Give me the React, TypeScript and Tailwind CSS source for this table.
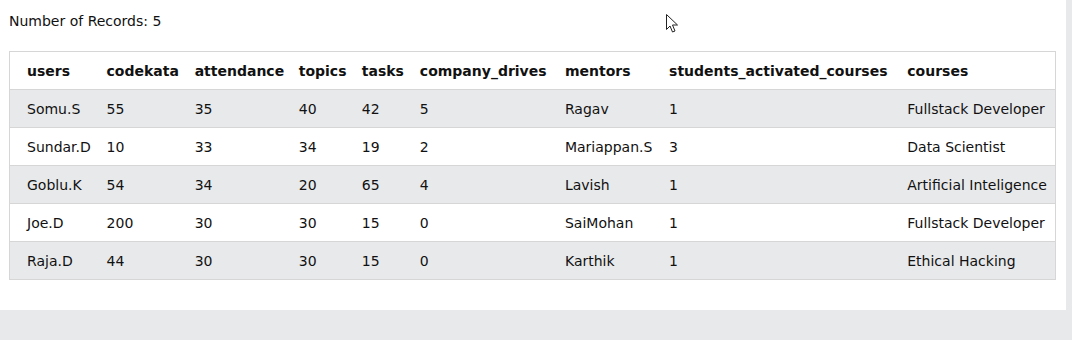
import React from "react";

const rows = [
  ["Somu.S", "55", "35", "40", "42", "5", "Ragav", "1", "Fullstack Developer"],
  ["Sundar.D", "10", "33", "34", "19", "2", "Mariappan.S", "3", "Data Scientist"],
  ["Goblu.K", "54", "34", "20", "65", "4", "Lavish", "1", "Artificial Inteligence"],
  ["Joe.D", "200", "30", "30", "15", "0", "SaiMohan", "1", "Fullstack Developer"],
  ["Raja.D", "44", "30", "30", "15", "0", "Karthik", "1", "Ethical Hacking"],
];
const headers = [
  "users",
  "codekata",
  "attendance",
  "topics",
  "tasks",
  "company_drives",
  "mentors",
  "students_activated_courses",
  "courses",
];
const widths = [
  "w-[80px]",
  "w-[88px]",
  "w-[104px]",
  "w-[63px]",
  "w-[58px]",
  "w-[145px]",
  "w-[104px]",
  "w-[238px]",
  "w-[165px]",
];

export default function App() {
  return (
    <div
      className="w-[1072px] h-[340px] bg-[#e8e9eb] text-[#111] text-[14px] relative overflow-hidden"
      style={{ fontFamily: "Verdana, 'DejaVu Sans', sans-serif" }}
    >
      <div className="w-[1066px] h-[310px] bg-white pt-[12px] pl-[9px]">
        <div className="leading-[18px]">Number of Records: 5</div>
        <table className="mt-[21px] border-collapse border border-[#d6d6d6] table-fixed w-[1047px]">
          <thead>
            <tr className="h-[38px]">
              {headers.map((h, i) => (
                <th
                  key={h}
                  className={`${widths[i]} text-left font-bold pl-[17px] pr-0 pt-[1px] whitespace-nowrap border-b border-[#d6d6d6]`}
                >
                  {h}
                </th>
              ))}
            </tr>
          </thead>
          <tbody>
            {rows.map((r, ri) => (
              <tr
                key={ri}
                className={`h-[38px] border-b border-[#d6d6d6] ${ri % 2 === 0 ? "bg-[#e8e9eb]" : "bg-white"}`}
              >
                {r.map((c, ci) => (
                  <td key={ci} className="pl-[17px] pr-0 pt-[1px] whitespace-nowrap">
                    {c}
                  </td>
                ))}
              </tr>
            ))}
          </tbody>
        </table>
      </div>
      <svg
        className="absolute left-[666px] top-[14px]"
        width="14"
        height="20"
        viewBox="0 0 14 20"
      >
        <path
          d="M0.5 0.5 L0.5 15.5 L4 12 L6.5 18 L9 17 L6.5 11 L11.5 11 Z"
          fill="white"
          stroke="#222"
          strokeWidth="1"
          strokeLinejoin="miter"
        />
      </svg>
    </div>
  );
}
